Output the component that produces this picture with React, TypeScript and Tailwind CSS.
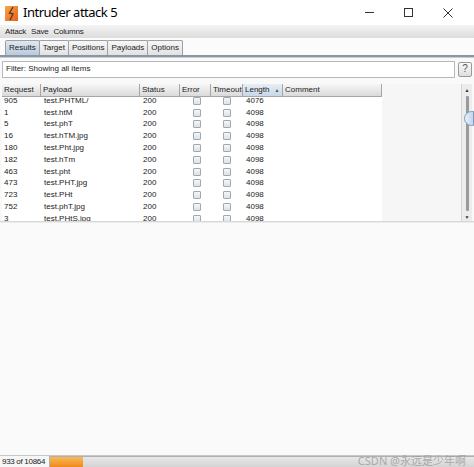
import React from "react";

const rows = [
  ["905", "test.PHTML/", "200", "4076"],
  ["1", "test.htM", "200", "4098"],
  ["5", "test.phT", "200", "4098"],
  ["16", "test.hTM.jpg", "200", "4098"],
  ["180", "test.Pht.jpg", "200", "4098"],
  ["182", "test.hTm", "200", "4098"],
  ["463", "test.pht", "200", "4098"],
  ["473", "test.PHT.jpg", "200", "4098"],
  ["723", "test.PHt", "200", "4098"],
  ["752", "test.phT.jpg", "200", "4098"],
  ["3", "test.PHtS.jpg", "200", "4098"],
];

const cols = "grid grid-cols-[39px_99px_40px_31px_32px_40px_99px]";

function Check() {
  return (
    <div className="w-[8px] h-[8px] border border-[#a0a8b0] bg-gradient-to-b from-[#f4f6f8] to-[#dde2e8] rounded-[1px]" />
  );
}

function Logo() {
  return (
    <svg width="13" height="15" viewBox="0 0 13 15">
      <defs>
        <linearGradient id="lg" x1="0" y1="0" x2="1" y2="1">
          <stop offset="0" stopColor="#f7a64a" />
          <stop offset="1" stopColor="#e8601c" />
        </linearGradient>
      </defs>
      <rect x="0" y="0" width="13" height="15" fill="url(#lg)" />
      <path d="M8 1 L4.5 7 L8 8 L5 14" stroke="#5a3a20" strokeWidth="1.4" fill="none" strokeLinejoin="miter" />
    </svg>
  );
}

export default function App() {
  const tabs = ["Results", "Target", "Positions", "Payloads", "Options"];
  return (
    <div className="relative w-[474px] h-[467px] overflow-hidden bg-[#f9f9f9] flex flex-col text-[8px] text-[#222] font-['Liberation_Sans',Arial,sans-serif] leading-none">
      {/* Title bar */}
      <div className="h-[25px] bg-white flex items-center shrink-0">
        <div className="ml-[5px] mt-[1px]"><Logo /></div>
        <div className="ml-[5px] text-[13px] tracking-[-0.5px] text-black font-['Noto_Sans',sans-serif]">Intruder attack 5</div>
        <div className="ml-auto flex items-center h-full">
          <div className="w-[38px] flex justify-center"><div className="w-[9px] h-px bg-[#333]" /></div>
          <div className="w-[40px] flex justify-center"><div className="w-[9px] h-[9px] border border-[#333]" /></div>
          <div className="w-[40px] flex justify-center mr-[6px]">
            <svg width="10" height="10" viewBox="0 0 10 10"><path d="M0.5 0.5 L9.5 9.5 M9.5 0.5 L0.5 9.5" stroke="#333" strokeWidth="1" /></svg>
          </div>
        </div>
      </div>
      {/* Menu bar */}
      <div className="h-[13px] shrink-0 bg-gradient-to-b from-[#f4f4f4] to-[#dcdcdc] flex items-center pl-[5px] gap-[5px] text-[8px] tracking-[-0.2px] text-[#222]">
        <span>Attack</span><span>Save</span><span>Columns</span>
      </div>
      {/* Tabs area */}
      <div className="h-[17px] shrink-0 bg-[#fbfbfb] flex items-end pl-[5px]">
        {tabs.map((t, i) => (
          <div
            key={t}
            className={
              "h-[15px] flex items-center px-[3px] border border-b-0 border-[#9aa0a6] rounded-t-[2px] -mr-px text-[8px] " +
              (i === 0
                ? "bg-gradient-to-b from-[#dfe8f1] to-[#b9cadb] border-[#7d8ea0]"
                : "bg-gradient-to-b from-[#f7f7f7] to-[#e2e2e2]")
            }
          >
            {t}
          </div>
        ))}
      </div>
      <div className="h-[3px] shrink-0 bg-[#8a96a4] border-b border-[#c8cdd3]" />
      {/* Filter */}
      <div className="h-[22px] shrink-0 flex items-center px-[2px] gap-[3px] bg-[#f9f9f9]">
        <div className="flex-1 h-[17px] bg-white border border-[#b8b8b8] flex items-center pl-[3px] text-[8px]">
          Filter: Showing all items
        </div>
        <div className="w-[14px] h-[15px] border border-[#9a9a9a] rounded-[2px] bg-gradient-to-b from-[#fafafa] to-[#dedede] flex items-center justify-center text-[10px] text-[#555]">?</div>
      </div>
      {/* Table */}
      <div className="mt-[4px] h-[137px] shrink-0 flex ml-[2px] relative">
        <div className="flex-1 flex flex-col bg-[#f6f6f6] overflow-hidden">
          <div className={cols + " h-[13px] shrink-0 w-[380px]"}>
            {["Request", "Payload", "Status", "Error", "Timeout", "Length", "Comment"].map((h) => (
              <div
                key={h}
                className={
                  "flex items-center pl-[2px] border-r border-b border-[#a6a6a6] overflow-hidden whitespace-nowrap " +
                  (h === "Length"
                    ? "bg-gradient-to-b from-[#e6eef6] to-[#c9d7e6]"
                    : "bg-gradient-to-b from-[#f7f7f7] to-[#dadada]")
                }
              >
                {h}
                {h === "Length" && <span className="ml-[5px] text-[5px] text-[#555]">▲</span>}
              </div>
            ))}
          </div>
          <div className="w-[380px] bg-white flex-1 overflow-hidden">
            <div className="-mt-[2px]">
              {rows.map((r, i) => (
                <div key={i} className={cols + " h-[11.8px] items-center"}>
                  <div className="pl-[2px]">{r[0]}</div>
                  <div className="pl-[3px]">{r[1]}</div>
                  <div className="pl-[3px]">{r[2]}</div>
                  <div className="flex justify-center pl-[2px]"><Check /></div>
                  <div className="flex justify-center"><Check /></div>
                  <div className="pl-[3px]">{r[3]}</div>
                  <div />
                </div>
              ))}
            </div>
          </div>
        </div>
        {/* Scrollbar */}
        <div className="w-[11px] mr-[2px] flex flex-col bg-[#ececec] border-l border-[#d4d4d4]">
          <div className="h-[2px]" />
          <div className="h-[8px] flex items-center justify-center text-[5px] text-[#333]">▲</div>
          <div className="flex-1 mx-auto w-[3px] bg-[#9a9a9a] my-[2px] rounded-[1px]" />
          <div className="h-[8px] flex items-center justify-center text-[5px] text-[#333]">▼</div>
        </div>
        <div className="absolute right-0 top-[27px] w-[10px] h-[15px] rounded-l-full border border-[#7c9ec0] bg-gradient-to-r from-[#e8f0f8] to-[#c4d6ea]" />
      </div>
      <div className="h-[2px] shrink-0 bg-[#d8d8d8] border-b border-[#ececec]" />
      {/* Empty lower panel */}
      <div className="flex-1 bg-[#fafafa]" />
      {/* Status bar */}
      <div className="h-[12px] shrink-0 flex items-center border-t border-[#c8c8c8] bg-[#f6f6f6]">
        <div className="w-[49px] pl-[2px] text-[8px] tracking-[-0.3px]">933 of 10864</div>
        <div className="flex-1 h-full flex bg-gradient-to-b from-[#e8e8e8] to-[#d4d4d4] border-l border-t border-[#b0b0b0]">
          <div className="w-[33px] h-full bg-gradient-to-b from-[#fbb955] to-[#ec8a16]" />
        </div>
      </div>
      <div className="absolute right-[8px] bottom-[1px] text-[11px] text-[#9a9a9a]/80 font-['Noto_Sans','Noto_Sans_CJK_SC',sans-serif]">CSDN @永远是少年啊</div>
    </div>
  );
}
